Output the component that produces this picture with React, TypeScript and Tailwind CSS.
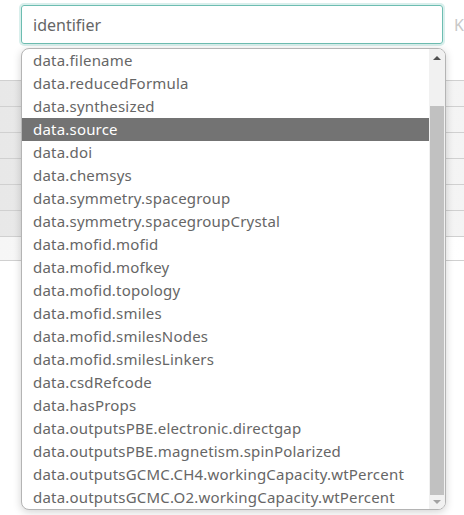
import React from "react";

const items = [
  "data.filename",
  "data.reducedFormula",
  "data.synthesized",
  "data.source",
  "data.doi",
  "data.chemsys",
  "data.symmetry.spacegroup",
  "data.symmetry.spacegroupCrystal",
  "data.mofid.mofid",
  "data.mofid.mofkey",
  "data.mofid.topology",
  "data.mofid.smiles",
  "data.mofid.smilesNodes",
  "data.mofid.smilesLinkers",
  "data.csdRefcode",
  "data.hasProps",
  "data.outputsPBE.electronic.directgap",
  "data.outputsPBE.magnetism.spinPolarized",
  "data.outputsGCMC.CH4.workingCapacity.wtPercent",
  "data.outputsGCMC.O2.workingCapacity.wtPercent",
];

export default function App() {
  return (
    <div
      className="relative w-[464px] h-[515px] overflow-hidden bg-white"
      style={{ fontFamily: '"Noto Sans", "Open Sans", sans-serif' }}
    >
      <div className="flex items-center h-[49px] pt-[5px] pb-[5px] pl-[21px]">
        <div className="w-[425px] h-[39px] rounded-[3px] border border-[#6dbdb1] shadow-[0_0_0_2px_#d9efec] flex items-center pl-[11px] text-[16px] text-[#666]">
          identifier
        </div>
        <div className="ml-[11px] text-[16px] text-[#c8c8c8]">K</div>
      </div>
      <div className="mt-[31px]">
        <div className="h-[26px] border-t border-[#d0d0d0] bg-gradient-to-r from-[#e8e8e8] to-[#f4f4f4]" />
        <div className="h-[26px] border-t border-[#d0d0d0] bg-gradient-to-r from-[#e8e8e8] to-[#f4f4f4]" />
        <div className="h-[26px] border-t border-[#d0d0d0] bg-gradient-to-r from-[#e8e8e8] to-[#f4f4f4]" />
        <div className="h-[26px] border-t border-[#d0d0d0] bg-gradient-to-r from-[#e8e8e8] to-[#f4f4f4]" />
        <div className="h-[26px] border-t border-[#d0d0d0] bg-gradient-to-r from-[#e8e8e8] to-[#f4f4f4]" />
        <div className="h-[26px] border-t border-[#d0d0d0] bg-gradient-to-r from-[#e8e8e8] to-[#f4f4f4]" />
        <div className="h-[25px] border-t border-b border-[#d0d0d0] bg-gradient-to-r from-[#f6f6f6] to-white" />
      </div>
      <div className="absolute left-[21px] top-[48px] w-[425px] h-[462px] rounded-[8px] border border-[#b4b4b4] bg-white shadow-[0_2px_8px_rgba(0,0,0,0.18)] overflow-hidden flex">
        <div className="flex-1 flex flex-col">
          {items.map((it, i) => (
            <div
              key={it}
              className={
                i === 3
                  ? "h-[23px] flex items-center pl-[11px] text-[15px] tracking-[0.2px] bg-[#737373] text-white"
                  : "h-[23px] flex items-center pl-[11px] text-[15px] tracking-[0.2px] text-[#666]"
              }
            >
              {it}
            </div>
          ))}
        </div>
        <div className="w-[16px] bg-[#f1f1f1] flex flex-col items-center">
          <div className="h-[17px] flex items-center justify-center">
            <div className="w-0 h-0 border-l-[4px] border-r-[4px] border-b-[4px] border-l-transparent border-r-transparent border-b-[#505050]" />
          </div>
          <div className="mt-[40px] w-[14px] h-[389px] bg-[#c1c1c1]" />
          <div className="flex-1 flex items-center justify-center">
            <div className="w-0 h-0 border-l-[4px] border-r-[4px] border-t-[4px] border-l-transparent border-r-transparent border-t-[#a3a3a3]" />
          </div>
        </div>
      </div>
    </div>
  );
}
